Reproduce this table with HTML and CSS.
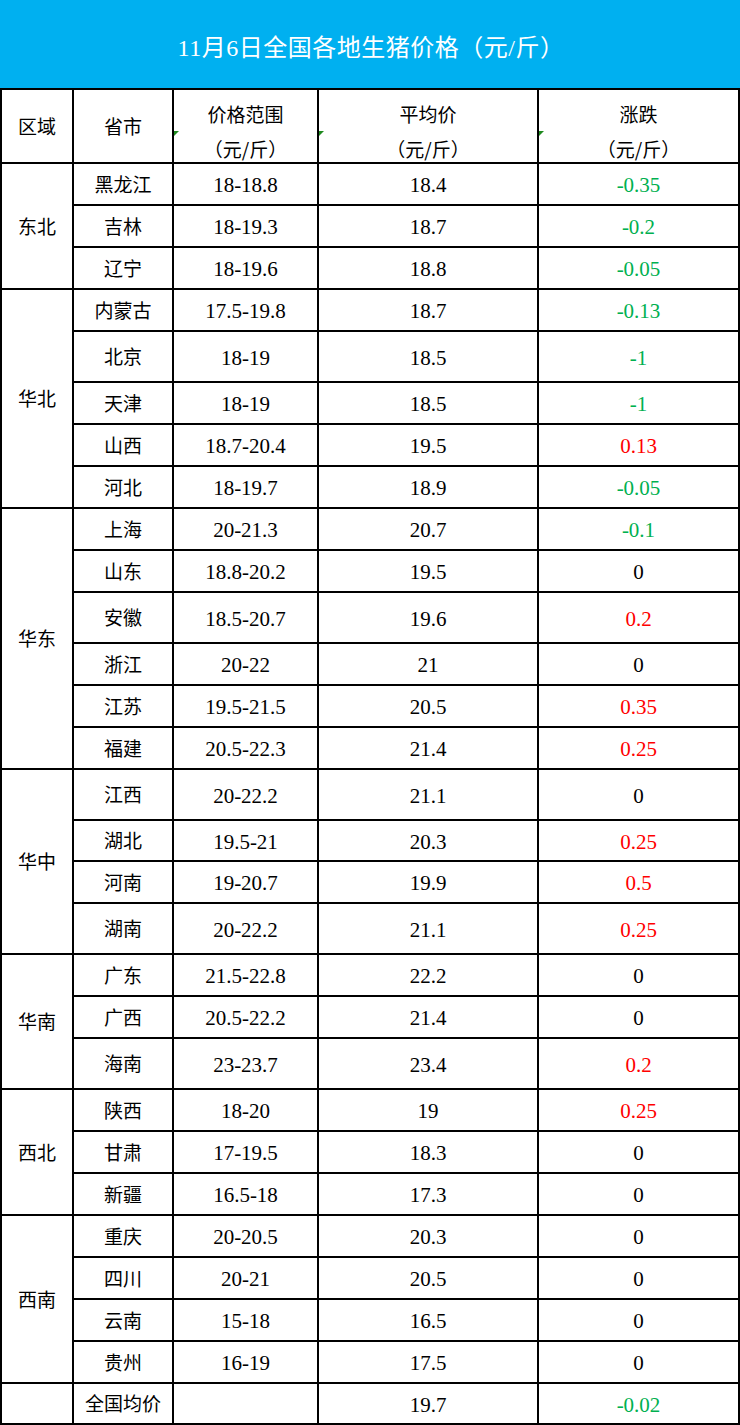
FILE: index.html
```html
<!DOCTYPE html>
<html lang="zh-CN">
<head>
<meta charset="utf-8">
<title>11月6日全国各地生猪价格</title>
<link rel="stylesheet" href="styles.css">
</head>
<body>
<div class="title">11月6日全国各地生猪价格（元/斤）</div>
<table class="grid">
  <tr class="head">
    <td class="c1">区域</td>
    <td class="c2">省市</td>
    <td class="c3 two"><span class="flag"></span><div class="hw"><div class="hl">价格范围</div><div class="hl">（元/斤）</div></div></td>
    <td class="c4 two"><span class="flag"></span><div class="hw"><div class="hl">平均价</div><div class="hl">（元/斤）</div></div></td>
    <td class="c5 two"><span class="flag"></span><div class="hw"><div class="hl">涨跌</div><div class="hl">（元/斤）</div></div></td>
  </tr>
  <tr><td rowspan="3">东北</td><td>黑龙江</td><td class="num">18-18.8</td><td class="num">18.4</td><td class="num dn">-0.35</td></tr>
  <tr><td>吉林</td><td class="num">18-19.3</td><td class="num">18.7</td><td class="num dn">-0.2</td></tr>
  <tr><td>辽宁</td><td class="num">18-19.6</td><td class="num">18.8</td><td class="num dn">-0.05</td></tr>

  <tr><td rowspan="5">华北</td><td>内蒙古</td><td class="num">17.5-19.8</td><td class="num">18.7</td><td class="num dn">-0.13</td></tr>
  <tr class="h51"><td>北京</td><td class="num">18-19</td><td class="num">18.5</td><td class="num dn">-1</td></tr>
  <tr><td>天津</td><td class="num">18-19</td><td class="num">18.5</td><td class="num dn">-1</td></tr>
  <tr><td>山西</td><td class="num">18.7-20.4</td><td class="num">19.5</td><td class="num up">0.13</td></tr>
  <tr><td>河北</td><td class="num">18-19.7</td><td class="num">18.9</td><td class="num dn">-0.05</td></tr>

  <tr><td rowspan="6">华东</td><td>上海</td><td class="num">20-21.3</td><td class="num">20.7</td><td class="num dn">-0.1</td></tr>
  <tr><td>山东</td><td class="num">18.8-20.2</td><td class="num">19.5</td><td class="num">0</td></tr>
  <tr class="h51"><td>安徽</td><td class="num">18.5-20.7</td><td class="num">19.6</td><td class="num up">0.2</td></tr>
  <tr><td>浙江</td><td class="num">20-22</td><td class="num">21</td><td class="num">0</td></tr>
  <tr><td>江苏</td><td class="num">19.5-21.5</td><td class="num">20.5</td><td class="num up">0.35</td></tr>
  <tr><td>福建</td><td class="num">20.5-22.3</td><td class="num">21.4</td><td class="num up">0.25</td></tr>

  <tr class="h51"><td rowspan="4">华中</td><td>江西</td><td class="num">20-22.2</td><td class="num">21.1</td><td class="num">0</td></tr>
  <tr class="h41"><td>湖北</td><td class="num">19.5-21</td><td class="num">20.3</td><td class="num up">0.25</td></tr>
  <tr><td>河南</td><td class="num">19-20.7</td><td class="num">19.9</td><td class="num up">0.5</td></tr>
  <tr class="h51"><td>湖南</td><td class="num">20-22.2</td><td class="num">21.1</td><td class="num up">0.25</td></tr>

  <tr><td rowspan="3">华南</td><td>广东</td><td class="num">21.5-22.8</td><td class="num">22.2</td><td class="num">0</td></tr>
  <tr><td>广西</td><td class="num">20.5-22.2</td><td class="num">21.4</td><td class="num">0</td></tr>
  <tr class="h51"><td>海南</td><td class="num">23-23.7</td><td class="num">23.4</td><td class="num up">0.2</td></tr>

  <tr><td rowspan="3">西北</td><td>陕西</td><td class="num">18-20</td><td class="num">19</td><td class="num up">0.25</td></tr>
  <tr><td>甘肃</td><td class="num">17-19.5</td><td class="num">18.3</td><td class="num">0</td></tr>
  <tr><td>新疆</td><td class="num">16.5-18</td><td class="num">17.3</td><td class="num">0</td></tr>

  <tr><td rowspan="4">西南</td><td>重庆</td><td class="num">20-20.5</td><td class="num">20.3</td><td class="num">0</td></tr>
  <tr><td>四川</td><td class="num">20-21</td><td class="num">20.5</td><td class="num">0</td></tr>
  <tr><td>云南</td><td class="num">15-18</td><td class="num">16.5</td><td class="num">0</td></tr>
  <tr><td>贵州</td><td class="num">16-19</td><td class="num">17.5</td><td class="num">0</td></tr>

  <tr class="h41"><td></td><td>全国均价</td><td class="num"></td><td class="num">19.7</td><td class="num dn">-0.02</td></tr>
</table>
</body>
</html>
```

FILE: styles.css
```css
html, body {
  margin: 0;
  padding: 0;
  background: #fff;
}

body {
  width: 740px;
  font-family: "Liberation Serif", "Noto Sans CJK SC", serif;
  color: #000;
}

.title {
  height: 88px;
  background: #00b0f0;
  color: #fff;
  display: flex;
  align-items: center;
  justify-content: center;
  font-size: 24px;
  letter-spacing: 0.5px;
  padding-left: 2px;
  padding-top: 2px;
  box-sizing: border-box;
}

.grid {
  width: 740px;
  table-layout: fixed;
  border-collapse: separate;
  border-spacing: 0;
  border-left: 2px solid #000;
  border-top: 2px solid #000;
  font-size: 19px;
}

.grid td {
  box-sizing: border-box;
  padding: 4px 0 0;
  border-right: 2px solid #000;
  border-bottom: 2px solid #000;
  text-align: center;
  vertical-align: middle;
  line-height: 1.2;
}

.grid tr {
  height: 42px;
}

.grid tr.h51 {
  height: 51px;
}

.grid tr.h41 {
  height: 41px;
}

.grid tr.head {
  height: 74px;
}

.head td {
  position: relative;
}

.grid td.two {
  vertical-align: top;
  padding-top: 6px;
}

.hw {
  margin-bottom: -6px;
}

.c1 { width: 72px; }
.c2 { width: 100px; }
.c3 { width: 145px; }
.c4 { width: 220px; }
.c5 { width: 201px; }

.hl {
  line-height: 35px;
  text-spacing-trim: space-all;
  font-family: "Noto Sans CJK SC", sans-serif;
}

.flag {
  position: absolute;
  left: 0;
  top: 41px;
  width: 0;
  height: 0;
  border-top: 5px solid #1f8a1f;
  border-right: 5px solid transparent;
}

.grid td.num {
  font-size: 21px;
}

.up {
  color: #ff0000;
}

.dn {
  color: #00b050;
}
```
